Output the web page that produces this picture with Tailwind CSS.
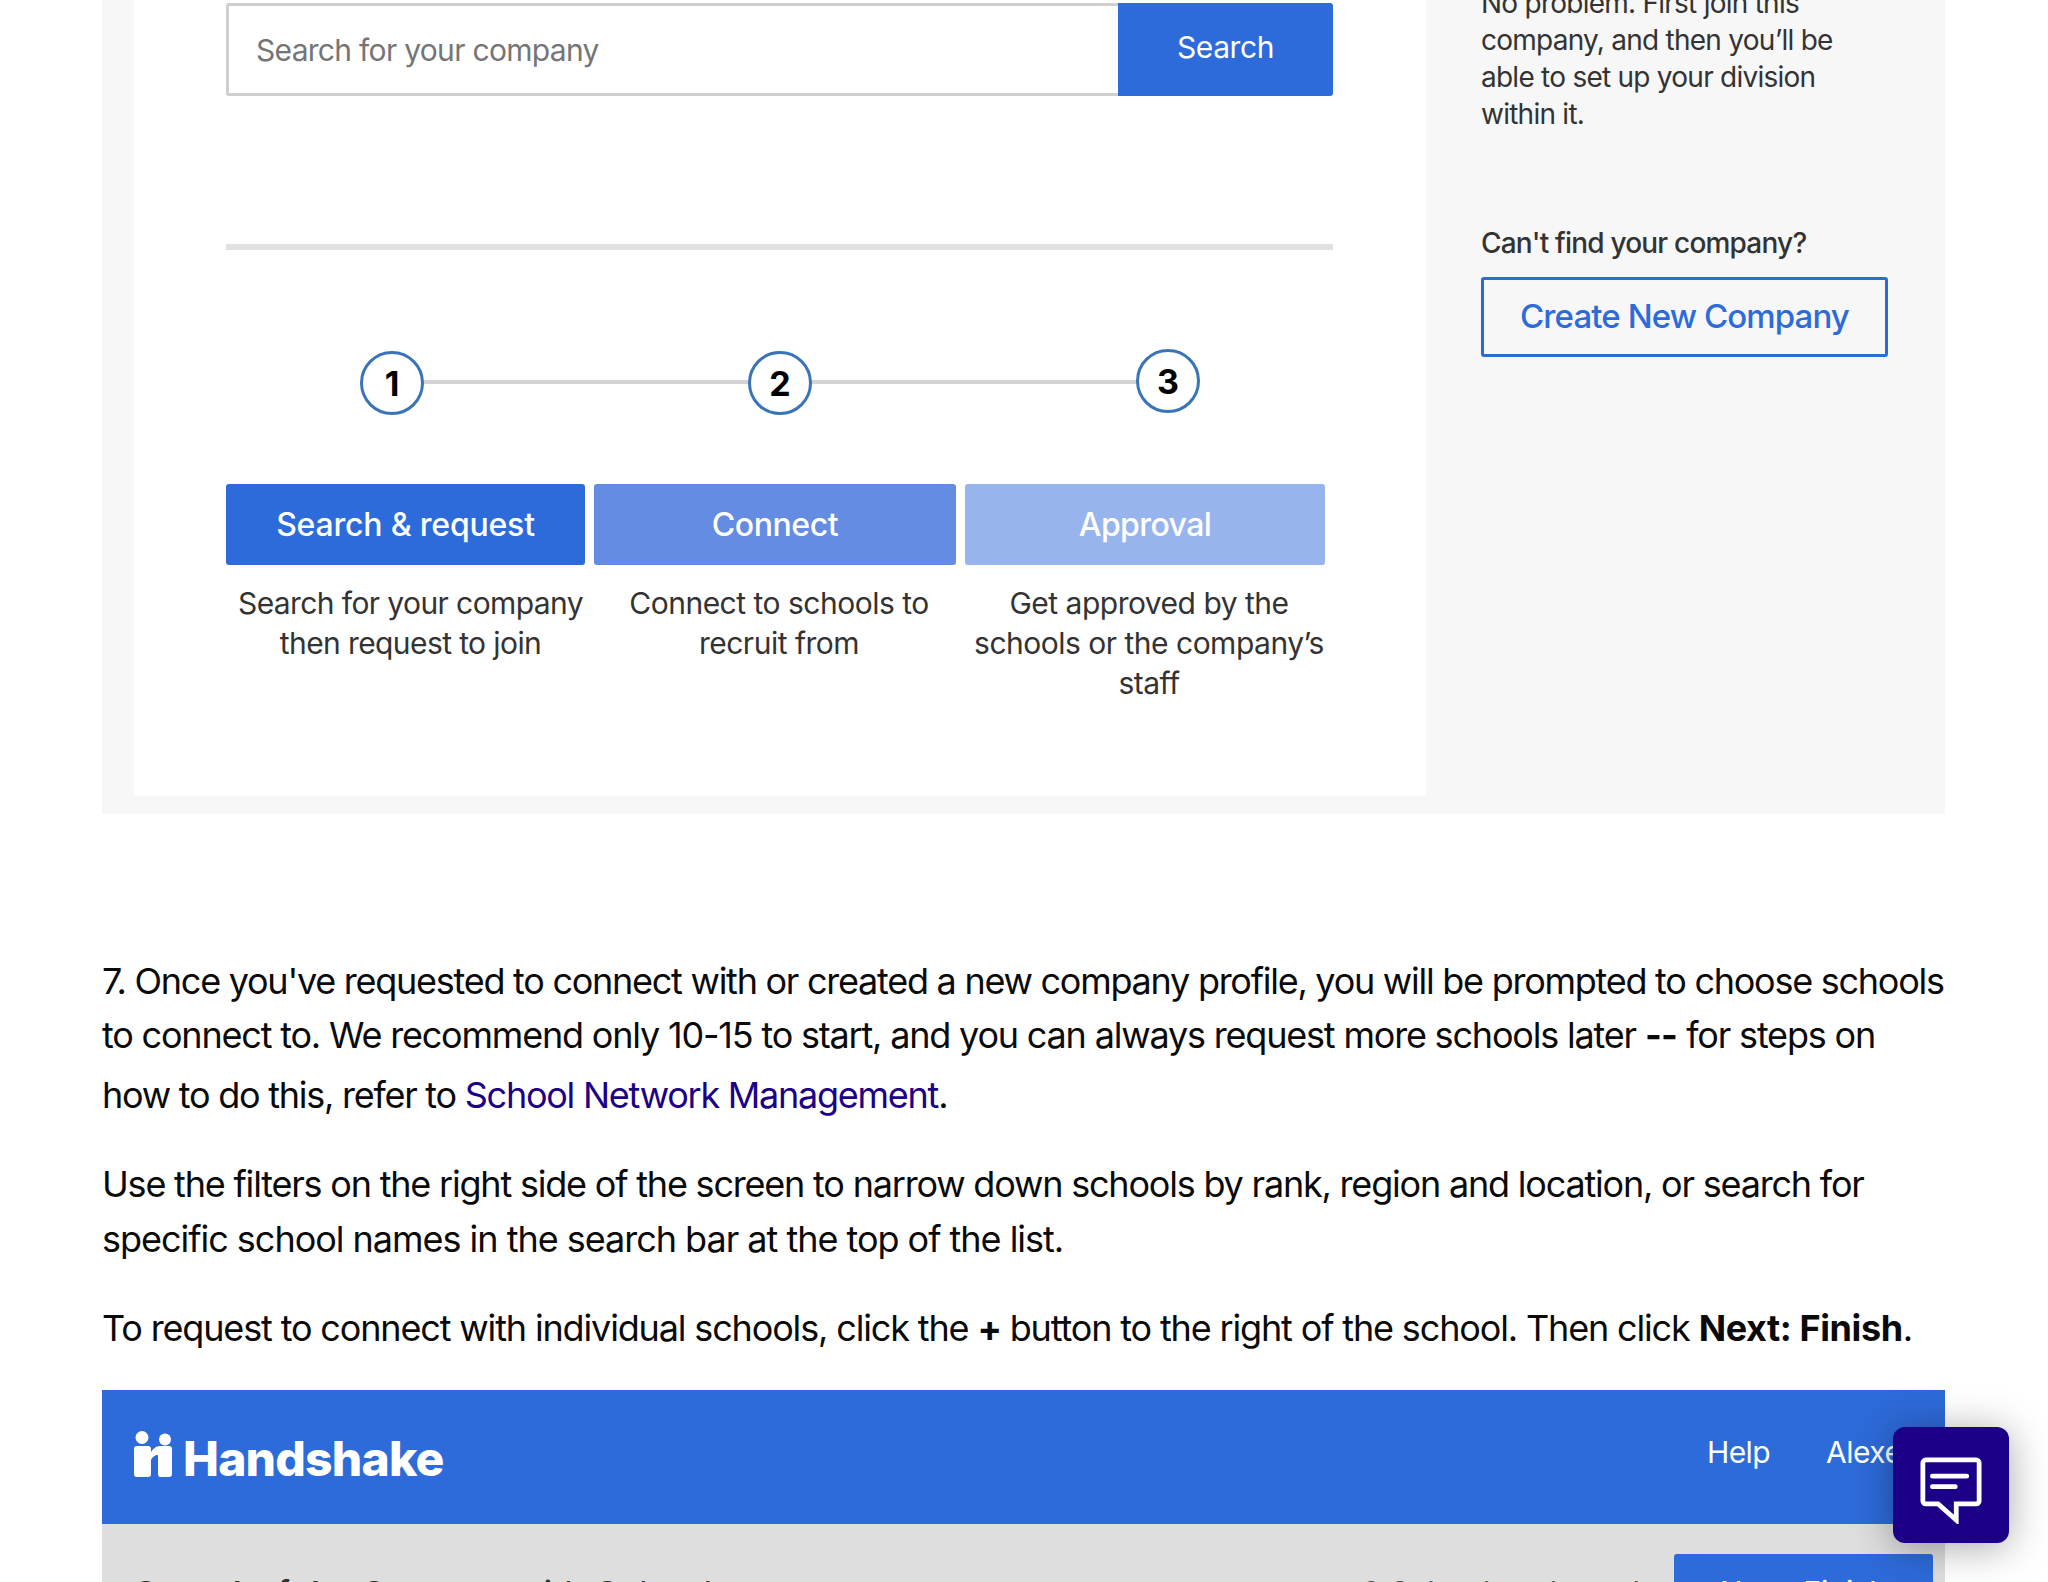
<!DOCTYPE html>
<html lang="en">
<head>
    <meta charset="UTF-8">
    <title>Connect to schools</title>
    <script src="https://cdn.jsdelivr.net/npm/@tailwindcss/browser@4"></script>
</head>
<body class="bg-white font-['Inter',sans-serif] text-[#111] overflow-hidden">
<div class="relative h-[1582px] overflow-hidden">
    <div class="px-[102px]">

        <!-- screenshot of the join company step -->
        <div class="-mt-[24px] w-[1843px] h-[838px] bg-[#f7f7f8] flex">
            <div class="ml-[32px] w-[1292px] h-[820px] bg-white pl-[92px] pr-[93px] pt-[27px]">
                <div class="flex h-[93px]">
                    <div class="w-[892px] border-[3px] border-[#cfcfcf] border-r-0 rounded-l-[3px] flex items-center pl-[27px] pt-[2px] text-[30px] tracking-[-0.7px] text-[#757575]">Search for your company</div>
                    <div class="w-[215px] bg-[#2d6bda] rounded-r-[3px] flex items-center justify-center text-[30px] tracking-[-0.4px] text-white pb-[4px]">Search</div>
                </div>
                <div class="mt-[148px] h-[6px] bg-[#e1e1e1]"></div>

                <div class="relative mt-[102px] h-[62px] w-[1107px]">
                    <div class="absolute left-[166px] right-[166px] top-[28px] h-[4px] bg-[#d4d4d4]"></div>
                    <div class="absolute left-[134px] -top-[1px] size-[64px] rounded-full border-[3px] border-[#3a74b8] bg-white flex items-center justify-center text-[34px] font-bold text-black">1</div>
                    <div class="absolute left-[522px] -top-[1px] size-[64px] rounded-full border-[3px] border-[#3a74b8] bg-white flex items-center justify-center text-[34px] font-bold text-black">2</div>
                    <div class="absolute left-[910px] -top-[3px] size-[64px] rounded-full border-[3px] border-[#3a74b8] bg-white flex items-center justify-center text-[34px] font-bold text-black">3</div>
                </div>

                <div class="mt-[70px] flex gap-[9px]">
                    <div class="w-[359px] h-[81px] bg-[#2d6bda] rounded-[3px] flex items-center justify-center text-[32px] font-medium tracking-[-0.2px] text-white">Search &amp; request</div>
                    <div class="w-[362px] h-[81px] bg-[#648ce2] rounded-[3px] flex items-center justify-center text-[32px] font-medium tracking-[-0.4px] text-white">Connect</div>
                    <div class="w-[360px] h-[81px] bg-[#98b4ec] rounded-[3px] flex items-center justify-center text-[32px] font-medium tracking-[-0.6px] text-white">Approval</div>
                </div>
                <div class="mt-[18px] flex text-center text-[30px] leading-[40px] tracking-[-0.6px] text-[#333]">
                    <div class="w-[366px] pl-[3px]">Search for your company<br>then request to join</div>
                    <div class="w-[362px] pl-[12px] tracking-[-0.5px]">Connect to schools to<br>recruit from</div>
                    <div class="w-[370px] pl-[20px] whitespace-nowrap tracking-[-0.5px]">Get approved by the<br>schools or the company’s<br>staff</div>
                </div>
            </div>

            <div class="pl-[55px] pt-[9px]">
                <p class="text-[28px] leading-[37px] tracking-[-0.75px] text-[#333]">No problem. First join this<br>company, and then you’ll be<br>able to set up your division<br>within it.</p>
                <p class="mt-[92px] text-[28px] leading-[37px] tracking-[-0.8px] font-medium text-[#333]">Can't find your company?</p>
                <div class="mt-[15px] w-[407px] h-[80px] border-[3px] border-[#2d6bda] rounded-[3px] flex items-center justify-center text-[33px] font-medium tracking-[-0.9px] text-[#2d6bda]">Create New Company</div>
            </div>
        </div>

        <!-- article text -->
        <div class="mt-[140px] text-[36px] tracking-[-1.15px] text-[#0a0a0a] whitespace-nowrap">
            <p class="leading-[54px]"><span class="tracking-[-1.26px]">7. Once you've requested to connect with or created a new company profile, you will be prompted to choose schools</span><br><span class="tracking-[-1.19px]">to connect to. We recommend only 10-15 to start, and you can always request more schools later <span class="font-bold tracking-[-0.6px]">--</span> for steps on</span></p>
            <p class="leading-[54px] mt-[6px] tracking-[-1.25px]">how to do this, refer to <a class="text-[#1c0087]">School Network Management</a>.</p>
            <p class="mt-[35px] leading-[55px] tracking-[-1.2px]">Use the filters on the right side of the screen to narrow down schools by rank, region and location, or search for<br><span class="tracking-[-1.02px]">specific school names in the search bar at the top of the list.</span></p>
            <p class="mt-[34px] leading-[55px]">To request to connect with individual schools, click the <b class="font-bold">+</b> button to the right of the school. Then click <b class="font-bold tracking-[-0.4px]">Next: Finish</b>.</p>
        </div>

        <!-- second screenshot -->
        <div class="mt-[34px] w-[1843px]">
            <div class="h-[134px] bg-[#2d6bda] flex items-center pl-[32px] text-white">
                <svg width="38" height="46" viewBox="0 0 38 46" fill="#fff" class="-mt-[6px]">
                    <circle cx="8" cy="6.5" r="6.5"/><circle cx="31" cy="8.5" r="6"/>
                    <path d="M0 18c0-2 1-3 3-3h11c2 0 3 1 3 3v3c2-3 5-6 9-6h9c2 0 3 1 3 3v25c0 2-1 3-3 3h-9c-1 0-2-1-2-3V24c-3 0-6 2-7 5v14c0 2-1 3-3 3H3c-2 0-3-1-3-3z"/>
                </svg>
                <span class="ml-[11px] mt-[3px] text-[48px] font-extrabold tracking-[-0.8px] leading-none">Handshake</span>
                <span class="ml-auto text-[30px] tracking-[-0.6px] -mt-[10px]">Help</span>
                <span class="ml-[56px] w-[119px] text-[30px] tracking-[-0.5px] -mt-[10px]">Alexe</span>
            </div>
            <div class="h-[60px] bg-[#dedede] flex items-start pl-[32px] pr-[12px]">
                <span class="mt-[43px] text-[36px] text-[#333]">Step 4 of 4 - Connect with Schools</span>
                <span class="ml-auto mr-[34px] mt-[46px] text-[31px] text-[#555]">0 Schools selected</span>
                <div class="w-[259px] h-[80px] mt-[30px] bg-[#2d6bda] rounded-[3px] text-center text-white text-[30px] pt-[16px]">Next: Finish</div>
            </div>
        </div>
    </div>

    <!-- chat widget -->
    <div class="absolute left-[1893px] top-[1427px] w-[116px] h-[116px] rounded-[12px] bg-[#1c0087] shadow-[0_4px_40px_rgba(0,0,0,0.35)] flex items-center justify-center">
        <svg width="62" height="67" viewBox="0 0 65 70" fill="none" stroke="#fff" stroke-width="5" stroke-linecap="round" stroke-miterlimit="10" class="mt-[10px]">
            <path d="M6 3h53a3 3 0 0 1 3 3v40a3 3 0 0 1-3 3H38v17L19 49H6a3 3 0 0 1-3-3V6a3 3 0 0 1 3-3z"/>
            <path d="M13 20h36M13 31h24"/>
        </svg>
    </div>
</div>
</body>
</html>
